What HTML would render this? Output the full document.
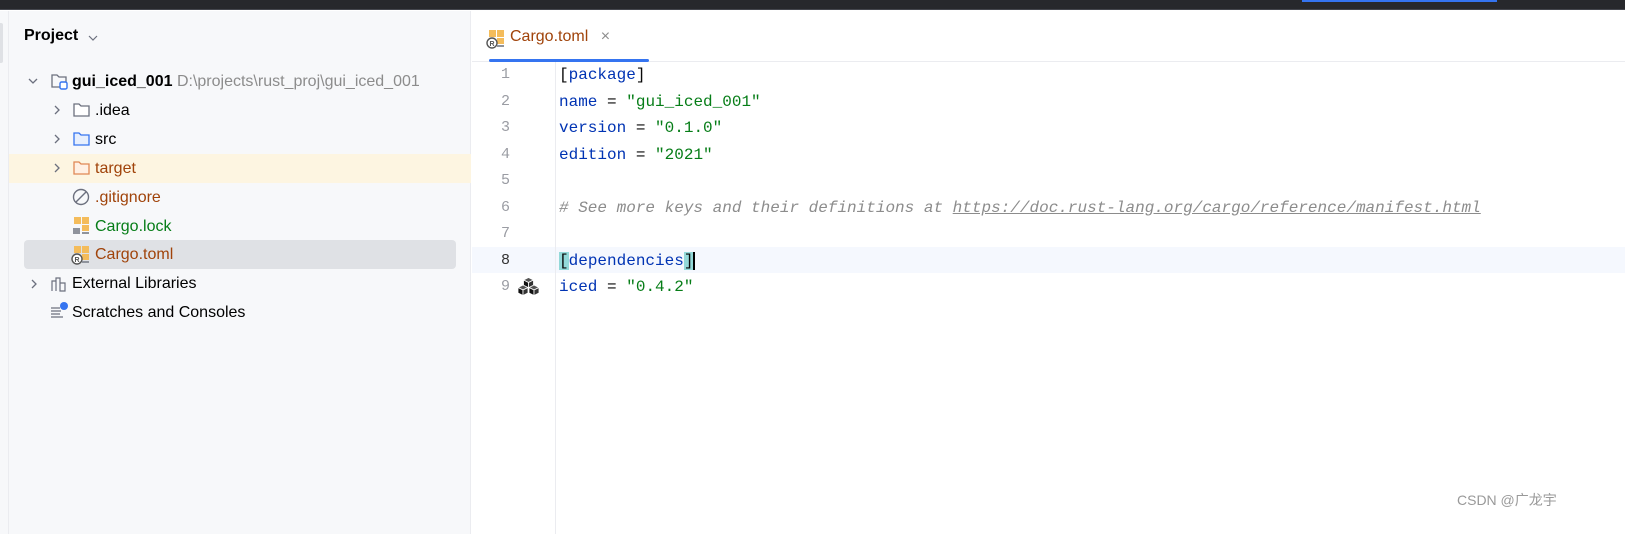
<!DOCTYPE html>
<html><head><meta charset="utf-8"><style>
*{margin:0;padding:0;box-sizing:border-box}
body{width:1625px;height:534px;overflow:hidden;background:#fff;font-family:"Liberation Sans",sans-serif;position:relative}
.top{position:absolute;left:0;top:0;width:1625px;height:10px;background:#27282c;border-bottom:1px solid #44464d}
.topblue{position:absolute;left:1302px;top:0;width:195px;height:2px;background:#3574f0}
.side{position:absolute;left:0;top:11px;width:471px;height:523px;background:#f7f8fa;border-right:1px solid #ebecf0}
.strip{position:absolute;left:0;top:11px;width:9px;height:523px;background:#f7f8fa;border-right:1px solid #ebecf0}
.strip i{position:absolute;left:0;top:12px;width:3px;height:40px;background:#dfe1e5;border-radius:0 2px 2px 0}
.title{position:absolute;left:24px;top:27px;font-size:16px;font-weight:bold;color:#000}
.row{position:absolute;height:29px;line-height:29px;font-size:16px;color:#000;white-space:nowrap}
.hl{position:absolute;left:9px;top:154px;width:462px;height:29px;background:#fdf5e1}
.sel{position:absolute;left:24px;top:240px;width:432px;height:29px;background:#dfe1e5;border-radius:4px}
.chev{position:absolute}
.editor{position:absolute;left:472px;top:11px;right:0;bottom:0}
.tab{position:absolute;left:510px;top:28px;font-size:16px;color:#a0430a}
.tabline{position:absolute;left:489px;top:59px;width:160px;height:3px;background:#3574f0;border-radius:2px}
.tabsep{position:absolute;left:472px;top:61px;right:0;height:1px;background:#ebecf0}
.gut{position:absolute;left:555px;top:62px;width:1px;height:472px;background:#ebecf0}
.cur{position:absolute;left:472px;top:247px;right:0;height:26px;background:#f5f8fe}
.code{position:absolute;left:559px;font-family:"Liberation Mono",monospace;font-size:16px;line-height:26.5px;height:26.5px;white-space:pre;color:#0033b3}
.ln{position:absolute;width:40px;left:470px;text-align:right;font-family:"Liberation Mono",monospace;font-size:15px;line-height:26.5px;color:#9a9ca3}
.s{color:#067d17}.c{color:#8c8c8c;font-style:italic}.u{text-decoration:underline}.p{color:#080808}
.br{background:#93d9d9}
</style></head><body>
<div class="top"></div><div class="topblue"></div>
<div class="side"></div>
<div class="strip"><i></i></div>
<div class="title">Project</div>
<svg class="chev" style="left:87px;top:33px" width="12" height="10"><path d="M2 3l4 4 4-4" fill="none" stroke="#6c707e" stroke-width="1.2"/></svg>
<div class="hl"></div><div class="sel"></div>
<svg class="chev" style="left:27px;top:76px" width="12" height="10"><path d="M2 3l4 4 4-4" fill="none" stroke="#6c707e" stroke-width="1.3"/></svg>
<svg style="position:absolute;left:50px;top:72px" width="20" height="18"><path d="M2 3h5l2 2h7v10H2z" fill="none" stroke="#6c707e" stroke-width="1.3"/><rect x="10" y="10" width="7" height="7" rx="1.5" fill="#fff" stroke="#3574f0" stroke-width="1.4"/></svg>
<div class="row" style="left:72px;top:67px"><b>gui_iced_001</b> <span style="color:#8c8c8c">D:\projects\rust_proj\gui_iced_001</span></div>
<svg class="chev" style="left:52px;top:104px" width="10" height="12"><path d="M3 2l4 4-4 4" fill="none" stroke="#6c707e" stroke-width="1.3"/></svg>
<svg style="position:absolute;left:72px;top:101px" width="20" height="18"><path d="M2 3h5l2 2h8v10H2z" fill="#fff" stroke="#6c707e" stroke-width="1.3"/></svg>
<div class="row" style="left:95px;top:96px">.idea</div>
<svg class="chev" style="left:52px;top:133px" width="10" height="12"><path d="M3 2l4 4-4 4" fill="none" stroke="#6c707e" stroke-width="1.3"/></svg>
<svg style="position:absolute;left:72px;top:130px" width="20" height="18"><path d="M2 3h5l2 2h8v10H2z" fill="#e7effd" stroke="#3574f0" stroke-width="1.3"/></svg>
<div class="row" style="left:95px;top:125px">src</div>
<svg class="chev" style="left:52px;top:162px" width="10" height="12"><path d="M3 2l4 4-4 4" fill="none" stroke="#6c707e" stroke-width="1.3"/></svg>
<svg style="position:absolute;left:72px;top:159px" width="20" height="18"><path d="M2 3h5l2 2h8v10H2z" fill="#fff0e4" stroke="#e08855" stroke-width="1.3"/></svg>
<div class="row" style="left:95px;top:154px;color:#a0430a">target</div>
<svg style="position:absolute;left:72px;top:188px" width="20" height="18"><circle cx="9" cy="9" r="7.5" fill="none" stroke="#6c707e" stroke-width="1.4"/><path d="M4 14L14 4" stroke="#6c707e" stroke-width="1.4"/></svg>
<div class="row" style="left:95px;top:183px;color:#a0430a">.gitignore</div>
<svg style="position:absolute;left:72px;top:216px" width="20" height="20"><rect x="2" y="1" width="7" height="7" fill="#f4bc5b"/><rect x="10" y="1" width="7" height="7" fill="#f4bc5b"/><rect x="10" y="9" width="7" height="6" fill="#f4bc5b"/><rect x="1" y="12" width="7" height="6" fill="#8f939c"/><rect x="10" y="16" width="7" height="2" fill="#8f939c"/></svg>
<div class="row" style="left:95px;top:212px;color:#067d17">Cargo.lock</div>
<svg style="position:absolute;left:71px;top:245px" width="20" height="20"><rect x="3" y="1" width="7" height="7" fill="#f4bc5b"/><rect x="11" y="1" width="7" height="7" fill="#f4bc5b"/><rect x="11" y="9" width="7" height="6" fill="#f4bc5b"/><circle cx="6" cy="14" r="5" fill="#fff" stroke="#555" stroke-width="1.4"/><text x="3.5" y="17" font-size="7" font-family="Liberation Sans" font-weight="bold" fill="#555">R</text><rect x="11" y="16" width="7" height="2" fill="#8f939c"/></svg>
<div class="row" style="left:95px;top:240px;color:#a0430a">Cargo.toml</div>
<svg class="chev" style="left:29px;top:278px" width="10" height="12"><path d="M3 2l4 4-4 4" fill="none" stroke="#6c707e" stroke-width="1.3"/></svg>
<svg style="position:absolute;left:50px;top:275px" width="20" height="18"><path d="M2 16V6h4v10M6 16V3h4v13M10 16V8h5v8z" fill="none" stroke="#6c707e" stroke-width="1.2"/></svg>
<div class="row" style="left:72px;top:269px">External Libraries</div>
<svg style="position:absolute;left:50px;top:302px" width="20" height="18"><path d="M1 6h9M1 9h10M1 12h9M1 15h12" stroke="#6c707e" stroke-width="1.3"/><circle cx="14" cy="4" r="4" fill="#3574f0"/></svg>
<div class="row" style="left:72px;top:298px">Scratches and Consoles</div>

<div class="tabsep"></div>
<svg style="position:absolute;left:486px;top:29px" width="20" height="20"><rect x="3" y="1" width="7" height="7" fill="#f4bc5b"/><rect x="11" y="1" width="7" height="7" fill="#f4bc5b"/><rect x="11" y="9" width="7" height="6" fill="#f4bc5b"/><circle cx="6" cy="14" r="5" fill="#fff" stroke="#555" stroke-width="1.4"/><text x="3.5" y="17" font-size="7" font-family="Liberation Sans" font-weight="bold" fill="#555">R</text><rect x="11" y="16" width="7" height="2" fill="#8f939c"/></svg>
<div class="tab">Cargo.toml <span style="color:#8c8c8c;margin-left:8px">&#215;</span></div>
<div class="tabline"></div>
<div class="cur"></div>
<div class="gut"></div>
<div class="ln" style="top:62px">1</div><div class="ln" style="top:88.5px">2</div><div class="ln" style="top:115px">3</div><div class="ln" style="top:141.5px">4</div><div class="ln" style="top:168px">5</div><div class="ln" style="top:194.5px">6</div><div class="ln" style="top:221px">7</div><div class="ln" style="top:247.5px;color:#333">8</div><div class="ln" style="top:274px">9</div>
<svg style="position:absolute;left:516px;top:277px" width="25" height="22" viewBox="0 0 25 22"><g stroke="#fff" stroke-width="0.8" stroke-linejoin="round">
<path d="M12.5 0.5l5 2.5-5 2.5-5-2.5z" fill="#555"/><path d="M7.5 3l5 2.5v5.5l-5-2.5z" fill="#111"/><path d="M17.5 3l-5 2.5v5.5l5-2.5z" fill="#333"/>
<path d="M7 8l5 2.5-5 2.5-5-2.5z" fill="#555"/><path d="M2 10.5l5 2.5v5.5l-5-2.5z" fill="#111"/><path d="M12 10.5l-5 2.5v5.5l5-2.5z" fill="#333"/>
<path d="M18 8l5 2.5-5 2.5-5-2.5z" fill="#555"/><path d="M13 10.5l5 2.5v5.5l-5-2.5z" fill="#111"/><path d="M23 10.5l-5 2.5v5.5l5-2.5z" fill="#333"/>
</g></svg>
<div class="code" style="top:62px"><span class="p">[</span>package<span class="p">]</span></div>
<div class="code" style="top:88.5px">name <span class="p">=</span> <span class="s">"gui_iced_001"</span></div>
<div class="code" style="top:115px">version <span class="p">=</span> <span class="s">"0.1.0"</span></div>
<div class="code" style="top:141.5px">edition <span class="p">=</span> <span class="s">"2021"</span></div>
<div class="code c" style="top:194.5px"># See more keys and their definitions at <span class="u">https://doc.rust-lang.org/cargo/reference/manifest.html</span></div>
<div class="code" style="top:247.5px"><span class="p br">[</span>dependencies<span class="p br">]</span><span style="border-left:2px solid #000;margin-left:0"></span></div>
<div class="code" style="top:274px">iced <span class="p">=</span> <span class="s">"0.4.2"</span></div>
<div style="position:absolute;left:1457px;top:490px;font-size:14px;color:#999;font-family:'Liberation Sans','Noto Sans CJK SC',sans-serif">CSDN @广龙宇</div>
</body></html>
